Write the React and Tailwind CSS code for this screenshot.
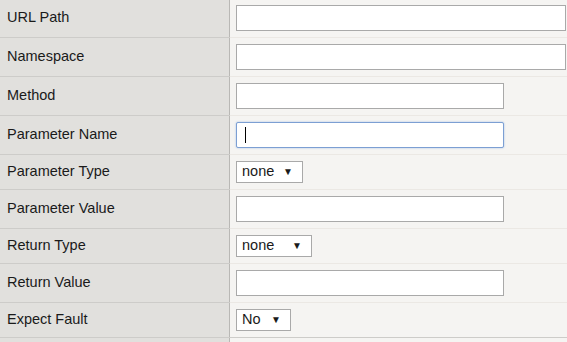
import React from 'react';

const rows = [
  { label: 'URL Path', kind: 'input', w: 'w-[330px]' },
  { label: 'Namespace', kind: 'input', w: 'w-[330px]' },
  { label: 'Method', kind: 'input', w: 'w-[268px]' },
  { label: 'Parameter Name', kind: 'input', w: 'w-[268px]', focused: true },
  { label: 'Parameter Type', kind: 'select', w: 'w-[67px]', value: 'none' },
  { label: 'Parameter Value', kind: 'input', w: 'w-[268px]' },
  { label: 'Return Type', kind: 'select', w: 'w-[76px]', value: 'none' },
  { label: 'Return Value', kind: 'input', w: 'w-[268px]' },
  { label: 'Expect Fault', kind: 'select', w: 'w-[55px]', value: 'No' },
];

const Field = ({ row }) => {
  if (row.kind === 'select') {
    return (
      <div className={`${row.w} h-[22px] bg-white border border-[#a9a9a9] flex items-center justify-between pl-[5px] pr-[9px] text-[14.5px] text-[#1a1a1a]`}>
        <span>{row.value}</span>
        <span className="text-[10px] leading-none">▼</span>
      </div>
    );
  }
  if (row.focused) {
    return (
      <div className={`${row.w} h-[26px] bg-white border border-[#7c9fd3] rounded-[2px] shadow-[0_0_2px_#9fbce6] flex items-center pl-[8px]`}>
        <span className="w-px h-[16px] bg-black" />
      </div>
    );
  }
  return <div className={`${row.w} h-[26px] bg-white border border-[#a9a9a9]`} />;
};

export default function App() {
  return (
    <div className="w-[567px] h-[342px] overflow-hidden bg-[#f5f4f2] font-['Liberation_Sans',Arial,sans-serif]">
      <div className="-mt-[2px]">
        {rows.map((row) => (
          <div key={row.label} className="flex border-t border-[#cdccc9]">
            <div className="w-[230px] shrink-0 bg-[#e1e0dd] border-r border-[#b9b8b5] flex items-center pl-[7px] text-[14.5px] text-[#1a1a1a]">
              {row.label}
            </div>
            <div className="flex-1 py-[6px] pl-[6px] border-t border-[#ebe8e4] -mt-px">
              <Field row={row} />
            </div>
          </div>
        ))}
        <div className="flex border-t border-[#cdccc9] h-[20px]">
          <div className="w-[230px] shrink-0 bg-[#e1e0dd] border-r border-[#b9b8b5]" />
          <div className="flex-1" />
        </div>
      </div>
    </div>
  );
}
